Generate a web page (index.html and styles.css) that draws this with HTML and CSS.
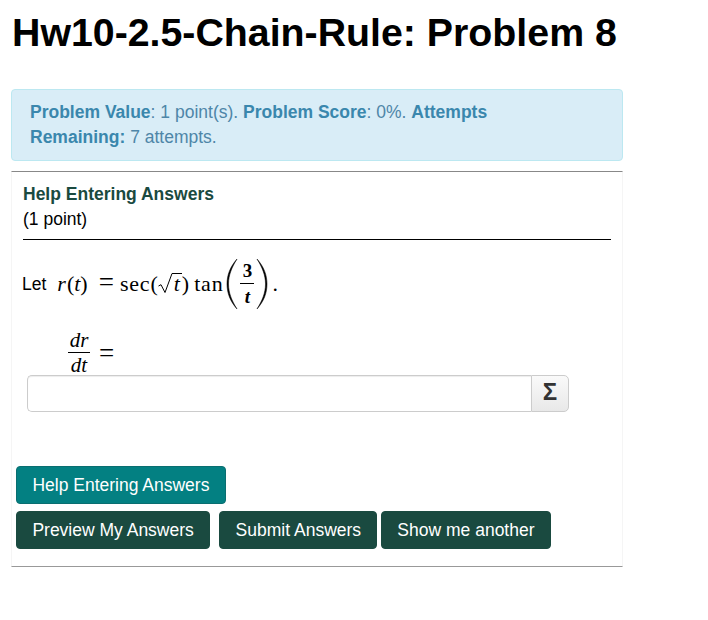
FILE: index.html
```html
<!DOCTYPE html>
<html lang="en">
  <head>
    <meta charset="UTF-8" />
    <title>Hw10-2.5-Chain-Rule: Problem 8</title>
    <link rel="stylesheet" href="styles.css">
  </head>

  <body>
    <div class="page">
      <h1 class="title">Hw10-2.5-Chain-Rule: Problem 8</h1>

      <div class="score-alert">
        <b>Problem Value</b>: 1 point(s). <b>Problem Score</b>: 0%. <b>Attempts<br>Remaining:</b> 7 attempts.
      </div>

      <div class="problem">
        <div class="problem-head">
          <h2 class="problem-name">Help Entering Answers</h2>
          <div class="problem-points">(1 point)</div>
        </div>

        <div class="statement">
          <span class="let">Let</span>
          <span class="math">
            <i class="var-r">r</i><span>(</span><i>t</i><span>)</span>
            <span class="rel">=</span>
            <span class="op">sec</span><span>(</span>
            <svg class="radical" width="15" height="21" viewBox="0 0 15 21"><path d="M0.500 13 L3 11.700 L7 19.500 L14 0.500 L15 0.500" fill="none" stroke="#000" stroke-width="1"/></svg>
            <i class="radicand">t</i>
            <span>)</span>
            <span class="op op-gap">tan</span>
            <svg class="paren" width="13" height="52" viewBox="0 0 13 52"><path d="M12 1 C5 9 2 17 2 26 C2 35 5 43 12 51 C7 43 3.500 35 3.500 26 C3.500 17 7 9 12 1 Z" fill="#000" stroke="#000" stroke-width="0.5"/></svg>
            <span class="frac frac-small">
              <span class="num">3</span>
              <i class="den">t</i>
            </span>
            <svg class="paren" width="13" height="52" viewBox="0 0 13 52"><path d="M1 1 C8 9 11 17 11 26 C11 35 8 43 1 51 C6 43 9.500 35 9.500 26 C9.500 17 6 9 1 1 Z" fill="#000" stroke="#000" stroke-width="0.5"/></svg>
            <span class="period">.</span>
          </span>
        </div>

        <div class="derivative">
          <span class="frac frac-deriv">
            <i class="num">dr</i>
            <i class="den">dt</i>
          </span>
          <span class="rel">=</span>
        </div>

        <div class="answer-row">
          <input type="text" class="answer-input" />
          <button class="sigma-btn">&Sigma;</button>
        </div>

        <div class="actions">
          <div class="button-row">
            <button class="button teal">Help Entering Answers</button>
          </div>
          <div class="button-row">
            <button class="button dark">Preview My Answers</button>
            <button class="button dark gap-wide">Submit Answers</button>
            <button class="button dark">Show me another</button>
          </div>
        </div>
      </div>
    </div>
  </body>
</html>
```

FILE: styles.css
```css
* {
  box-sizing: border-box;
  margin: 0;
  padding: 0;
}

body {
  background: #fff;
  color: #000;
  font-family: "Liberation Sans", Arial, sans-serif;
}

.page {
  width: 623px;
  padding-left: 11px;
}

.title {
  font-size: 39.3px;
  line-height: 42px;
  font-weight: bold;
  padding-top: 11px;
  padding-left: 1px;
  margin-bottom: 36px;
  white-space: nowrap;
}

.score-alert {
  height: 72px;
  padding: 10px 18px;
  font-size: 17.5px;
  line-height: 25px;
  color: #4e86a8;
  background: #d9edf7;
  border: 1px solid #bce8f1;
  border-radius: 4px;
}

.score-alert b {
  color: #3a87ad;
}

.problem {
  margin-top: 10px;
  height: 396px;
  padding: 11px 11px 0;
  border-top: 1px solid #888;
  border-left: 1px solid #f5f5f5;
  border-right: 1px solid #f5f5f5;
  border-bottom: 1px solid #999;
  box-shadow: 0 1px 0 #f0f0f0;
}

.problem-head {
  border-bottom: 1px solid #000;
  height: 57px;
}

.problem-name {
  font-size: 17.5px;
  line-height: 22px;
  font-weight: bold;
  color: #1a4a40;
  margin-bottom: 2px;
}

.problem-points {
  font-size: 17.5px;
  line-height: 25px;
}

.statement {
  display: flex;
  align-items: center;
  height: 52px;
  margin-top: 18px;
  margin-left: -1px;
}

.let {
  font-size: 17.5px;
  margin-right: 11px;
}

.math {
  display: flex;
  align-items: center;
  font-family: "Liberation Serif", "Times New Roman", serif;
  font-size: 22px;
  white-space: nowrap;
}

.rel {
  font-size: 27px;
  line-height: 22px;
  margin: 0 5px 0 9px;
}

.math .rel {
  margin: 0 6px 4px 11px;
}

.var-r {
  margin-right: 1px;
}

.radical {
  margin-bottom: 1px;
}

.radicand {
  border-top: 1px solid #000;
  line-height: 20px;
  padding: 0 2px 0 1px;
  margin-top: -1px;
}

.op {
  letter-spacing: 0.8px;
}

.op-gap {
  margin-left: 5px;
}

.paren {
  margin-left: 2px;
}

.period {
  margin-left: 3px;
}

.frac {
  display: inline-flex;
  flex-direction: column;
  align-items: center;
  text-align: center;
}

.frac .num {
  border-bottom: 1px solid #000;
  align-self: stretch;
}

.frac-small {
  width: 14px;
  margin-left: 2px;
  font-size: 19px;
}

.frac-small .num {
  font-weight: bold;
  line-height: 24px;
}

.frac-small .den {
  line-height: 25px;
  font-weight: bold;
}

.frac-deriv {
  width: 22px;
  font-size: 21px;
}

.frac-deriv .num,
.frac-deriv .den {
  line-height: 24px;
}

.derivative {
  display: flex;
  align-items: center;
  height: 46px;
  margin-left: 45px;
  margin-top: 19px;
  font-family: "Liberation Serif", "Times New Roman", serif;
  font-size: 22px;
}

.derivative .rel {
  margin-top: 2px;
}

.answer-row {
  display: flex;
  width: 542px;
  height: 37px;
  margin-left: 4px;
}

.answer-input {
  flex: 1;
  border: 1px solid #ccc;
  border-right: none;
  border-radius: 5px 0 0 5px;
  background: #fff;
  box-shadow: inset 0 1px 1px rgba(0, 0, 0, 0.075);
}

.sigma-btn {
  width: 38px;
  padding-bottom: 3px;
  border: 1px solid #ccc;
  border-radius: 0 5px 5px 0;
  background: linear-gradient(#fafafa, #e8e8e8);
  color: #333;
  font-family: "Liberation Sans", Arial, sans-serif;
  font-size: 24px;
  font-weight: bold;
}

.actions {
  margin-top: 54px;
  margin-left: -7px;
}

.button-row {
  display: flex;
  gap: 3.5px;
  margin-bottom: 7px;
}

.button {
  height: 38px;
  padding: 0 15.4px;
  border: 1px solid transparent;
  border-radius: 4px;
  color: #fff;
  font-family: "Liberation Sans", Arial, sans-serif;
  font-size: 17.5px;
  cursor: pointer;
}

.button.teal {
  background: #038082;
  border-color: #0a6e70;
}

.button.dark {
  background: #1a4a40;
  border-color: #1a4a40;
}

.button.gap-wide {
  margin-left: 5.5px;
}
```
